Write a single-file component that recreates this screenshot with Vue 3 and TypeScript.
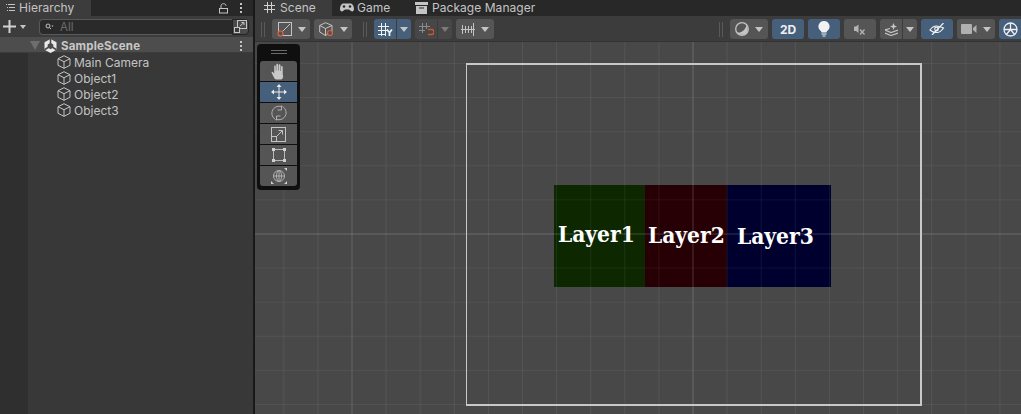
<script setup lang="ts">
const GRID = 34.1
const originX = 693 - 255
const originY = 234 - 42

const range = (from: number, to: number) => {
  const out: number[] = []
  for (let i = from; i <= to; i++) out.push(i)
  return out
}

const vLines = range(-13, 10).map((k) => ({ pos: originX + k * GRID, major: k % 10 === 0, center: k === 0 }))
const hLines = range(-5, 5).map((k) => ({ pos: originY + k * GRID, center: k === 0 }))

const objects = ['Main Camera', 'Object1', 'Object2', 'Object3']
const layers = [
  { name: 'Layer1', cls: 'green' },
  { name: 'Layer2', cls: 'red' },
  { name: 'Layer3', cls: 'blue' },
]
</script>

<template>
  <div class="editor">
    <section class="hierarchy">
      <div class="tabs">
        <div class="tab active hier-tab">
          <svg class="ico" width="9" height="9" viewBox="0 0 9 9">
            <path d="M0 1.500h1M2 1.500h7M1 4.500h1M3 4.500h6M1 7.500h1M3 7.500h6" stroke="#c4c4c4" fill="none" />
          </svg>
          <span>Hierarchy</span>
        </div>
        <div class="tab-spacer"></div>
        <svg class="lock" width="9" height="11" viewBox="0 0 9 11">
          <path d="M2 5V2.800C2 1.400 3 .7 4.500 .7S7 1.400 7 2.800" stroke="#c4c4c4" fill="none" />
          <rect x=".5" y="5.500" width="8" height="4.500" stroke="#c4c4c4" fill="none" />
        </svg>
        <div class="kebab light"><i></i><i></i><i></i></div>
      </div>
      <div class="hier-bar">
        <svg class="plus" width="13" height="13" viewBox="0 0 13 13">
          <path d="M6.500 0v13M0 6.500h13" stroke="#d2d2d2" stroke-width="2" />
        </svg>
        <i class="caret small"></i>
        <div class="search">
          <svg width="9" height="7" viewBox="0 0 9 7">
            <circle cx="3" cy="3" r="2" stroke="#c4c4c4" fill="none" />
            <path d="M4.500 4.500 6 6" stroke="#c4c4c4" />
            <path d="M6.500 2.500h2L7.500 4z" fill="#c4c4c4" />
          </svg>
          <span>All</span>
        </div>
        <div class="search-btn">
          <svg width="13" height="13" viewBox="0 0 13 13" fill="none" stroke="#c4c4c4">
            <rect x="3.500" y=".5" width="9" height="8" />
            <rect x=".5" y="7.500" width="5" height="5" fill="#3a3a3a" />
            <path d="M6 6l4-3.500M7.500 2.500H10V5" />
          </svg>
        </div>
      </div>
      <div class="scene-row">
        <i class="tree-arrow"></i>
        <svg class="unity" width="13" height="14" viewBox="0 0 13 14">
          <path d="M6.500 0 12.500 3.300V10.700L6.500 14 .5 10.700V3.300Z" fill="#eaeaea" />
          <path d="M6.500 7V0M6.500 7 .5 10.700M6.500 7 12.500 10.700" stroke="#4d4d4d" stroke-width="1.600" />
          <path d="M6.500 3.800 9.300 5.400V8.600L6.500 10.200 3.700 8.600V5.400Z" fill="#4d4d4d" />
        </svg>
        <span class="scene-name">SampleScene</span>
        <div class="kebab"><i></i><i></i><i></i></div>
      </div>
      <div class="tree">
        <div class="gutter"></div>
        <ul class="items">
          <li v-for="name in objects" :key="name">
            <svg width="14" height="14" viewBox="0 0 14 14" fill="none" stroke="#c4c4c4">
              <path d="M7 .7 13 3.700V10.300L7 13.300 1 10.300V3.700ZM1 3.700 7 6.700 13 3.700M7 6.700V13.300" />
            </svg>
            <span>{{ name }}</span>
          </li>
        </ul>
      </div>
    </section>

    <section class="scene">
      <div class="tabs">
        <div class="tab active scene-tab">
          <svg class="ico" width="11" height="11" viewBox="0 0 11 11">
            <path d="M3.500 0v11M7.500 0v11M0 3.500h11M0 7.500h11" stroke="#d2d2d2" />
          </svg>
          <span>Scene</span>
        </div>
        <div class="tab game-tab">
          <svg class="ico" width="14" height="9" viewBox="0 0 14 9">
            <path d="M3.500 .5h7C12.500 .5 14 3 14 6c0 2-1.500 3-3 2L9 6.500H5L3 8C1.500 9 0 8 0 6 0 3 1.500 .5 3.500 .5Z" fill="#c4c4c4" />
            <circle cx="4" cy="3.500" r="1.300" fill="#282828" />
            <circle cx="10" cy="3.500" r="1.300" fill="#282828" />
          </svg>
          <span>Game</span>
        </div>
        <div class="tab pm-tab">
          <svg class="ico" width="13" height="12" viewBox="0 0 13 12">
            <path d="M0 0h13v3H0zM1 4h11v8H1z" fill="#c4c4c4" />
            <path d="M4 6h5" stroke="#282828" />
          </svg>
          <span>Package Manager</span>
        </div>
      </div>

      <div class="toolbar">
        <i class="grip"></i>
        <button class="tb w38 first">
          <svg width="15" height="15" viewBox="0 0 15 15" fill="none">
            <rect x="1.500" y=".5" width="13" height="13" stroke="#c4c4c4" />
            <path d="M3.500 11.500 13 2" stroke="#c4c4c4" />
            <circle cx="3.500" cy="11.500" r="2.500" fill="#555" stroke="#e0603a" stroke-width="1.200" />
          </svg>
          <i class="caret"></i>
        </button>
        <button class="tb w38">
          <svg width="15" height="15" viewBox="0 0 15 15" fill="none">
            <path d="M6.500 .7 13 3.500V10L6.500 13.500 .7 10V3.500ZM.7 3.500 6.500 6.500 13 3.500M6.500 6.500V13.500" stroke="#c4c4c4" />
            <circle cx="11" cy="11" r="2.500" fill="#555" stroke="#e0603a" stroke-width="1.200" />
          </svg>
          <i class="caret"></i>
        </button>
        <i class="grip second"></i>
        <div class="split">
          <button class="tb blue main">
            <svg width="15" height="13" viewBox="0 0 15 13" fill="none" stroke="#f0f0f0">
              <path d="M3.500 0v13M7.500 0v13M0 3.500h11M0 7.500h10M0 11.500h7" />
              <path d="M9 6.500 11.500 9.500 14 6.500M11.500 9.500V13" stroke-width="1.800" />
            </svg>
          </button>
          <button class="tb blue arrow"><i class="caret"></i></button>
        </div>
        <div class="split">
          <button class="tb dim main">
            <svg width="15" height="13" viewBox="0 0 15 13" fill="none">
              <path d="M3.500 0v10M7.500 0v6M0 3.500h11M0 7.500h6" stroke="#8b8b8b" />
              <path d="M9 6.500h3.500a2 2 0 0 1 0 5H9" stroke="#c9562e" stroke-width="1.500" />
            </svg>
          </button>
          <button class="tb dim arrow"><i class="caret faded"></i></button>
        </div>
        <button class="tb w38">
          <svg width="14" height="13" viewBox="0 0 14 13" fill="none" stroke="#c4c4c4">
            <path d="M1.500 2v9M4.500 3v7M7.500 3v7M10.500 3v7M12.500 0v13M0 6.500h14" />
          </svg>
          <i class="caret"></i>
        </button>

        <div class="tb-fill"></div>

        <i class="grip third"></i>
        <button class="tb w38">
          <svg width="14" height="14" viewBox="0 0 14 14">
            <circle cx="7" cy="7" r="6.300" fill="none" stroke="#c4c4c4" stroke-width="1.300" />
            <path d="M2 10.500C6 11 10 9 11.500 3c2 3.500 1.500 7-1 9-2.500 1.500-6 1-8.500-1.500Z" fill="#c4c4c4" />
          </svg>
          <i class="caret"></i>
        </button>
        <button class="tb blue w32 label">2D</button>
        <button class="tb blue w32">
          <svg width="12" height="16" viewBox="0 0 12 16">
            <path d="M6 0a5.500 5.500 0 0 1 3.200 10c-.5.400-.7 1-.7 1.500h-5c0-.5-.2-1.100-.7-1.500A5.500 5.500 0 0 1 6 0Z" fill="#f2f2f2" />
            <path d="M3.500 13h5M4.500 15h3" stroke="#f2f2f2" />
          </svg>
        </button>
        <button class="tb w32">
          <svg width="12" height="11" viewBox="0 0 12 11">
            <path d="M0 2.500h2L4.500 .5v8.500L2 7H0Z" fill="#b4b4b4" />
            <path d="M6 5.500l4.500 5M10.500 5.500l-4.500 5" stroke="#b4b4b4" stroke-width="1.300" />
          </svg>
        </button>
        <div class="split">
          <button class="tb main">
            <svg width="13" height="13" viewBox="0 0 13 13" fill="none">
              <path d="M8.500 0 9.500 2.500 12 3.500 9.500 4.500 8.500 7 7.500 4.500 5 3.500 7.500 2.500Z" fill="#c4c4c4" />
              <path d="M0 7 5 5.500M0 7 6 9.500 13 7M0 10 6 12.500 13 10" stroke="#c4c4c4" stroke-width="1.200" />
            </svg>
          </button>
          <button class="tb arrow"><i class="caret"></i></button>
        </div>
        <button class="tb blue w32">
          <svg width="16" height="12" viewBox="0 0 16 12" fill="none" stroke="#f0f0f0" stroke-width="1.200">
            <path d="M1 7c2-3 4-4 6.500-4S12 4 14.500 5c-2 3-4 4.500-6.500 4.500S3 9 1 7Z" />
            <circle cx="7.500" cy="6" r="1.800" />
            <path d="M3 12 14.500 0" />
          </svg>
        </button>
        <button class="tb w38">
          <svg width="16" height="10" viewBox="0 0 16 10">
            <rect width="11" height="10" rx="1" fill="#b0b0b0" />
            <path d="M12 4 15.500 1v8L12 6Z" fill="#b0b0b0" />
          </svg>
          <i class="caret"></i>
        </button>
        <button class="tb blue gizmo">
          <svg width="15" height="15" viewBox="0 0 15 15" fill="none" stroke="#f0f0f0" stroke-width="1.300">
            <circle cx="7.500" cy="7.500" r="6.500" />
            <path d="M1 7.500h13M7.500 1v6.500L3 13M7.500 7.500 12 13" />
          </svg>
        </button>
      </div>

      <div class="canvas">
        <div class="layer-strip">
          <div v-for="layer in layers" :key="layer.name" class="layer" :class="layer.cls">
            <span>{{ layer.name }}</span>
          </div>
        </div>

        <svg class="grid" width="766" height="372">
          <line
            v-for="l in vLines"
            :key="'v' + l.pos"
            :x1="l.pos"
            :x2="l.pos"
            y1="0"
            y2="372"
            :stroke-opacity="l.center ? 0.2 : l.major ? 0.15 : 0.07"
            stroke="#fff"
          />
          <line
            v-for="l in hLines"
            :key="'h' + l.pos"
            :y1="l.pos"
            :y2="l.pos"
            x1="0"
            x2="766"
            :stroke-opacity="l.center ? 0.2 : 0.06"
            stroke="#fff"
          />
        </svg>

        <div class="frame"></div>

        <div class="palette">
          <div class="palette-grip"><i></i><i></i></div>
          <button class="tool">
            <svg width="16" height="17" viewBox="0 0 15 16">
              <path d="M3 14C1.500 11 .3 9 .5 8.500 1 7.500 2.500 9 3 10V3.500C3 2 4.500 2 4.500 3.500V7h.5V1.800c0-1.500 1.700-1.500 1.700 0V7h.5V2.300c0-1.500 1.700-1.500 1.700 0V7.500h.5V4c0-1.500 1.600-1.500 1.600 0v6.500C12 13 11 15.500 9 15.500H5.500C4.500 15.500 3.700 15 3 14Z" fill="#c8c8c8" />
            </svg>
          </button>
          <button class="tool on">
            <svg width="16" height="16" viewBox="0 0 16 16" fill="#eaeaea">
              <path d="M8 0 10.500 3h-5ZM8 16 5.500 13h5ZM0 8 3 5.500v5ZM16 8 13 10.500v-5Z" />
              <path d="M3 8h10M8 3v10" stroke="#eaeaea" />
            </svg>
          </button>
          <button class="tool">
            <svg width="16" height="16" viewBox="0 0 16 16" fill="none" stroke="#b0b0b0">
              <path d="M4.500 14.500C.5 12 -.2 7 2.500 3.800 4.500 1.500 7.500 .8 10 1.500" />
              <path d="M11.500 1.500C15.500 4 16.200 9 13.500 12.200 11.500 14.500 8.500 15.200 6 14.500" />
              <path d="M10.500 .5V5H6.500M5.500 15.500V11H9.500" />
            </svg>
          </button>
          <button class="tool">
            <svg width="15" height="15" viewBox="0 0 15 15" fill="none" stroke="#c4c4c4">
              <rect x=".5" y=".5" width="14" height="14" />
              <rect x=".5" y="9.500" width="5" height="5" />
              <path d="M6 9 11 4M7.500 3.500H11.500V7.500" />
            </svg>
          </button>
          <button class="tool">
            <svg width="14" height="14" viewBox="0 0 14 14">
              <rect x="1.500" y="1.500" width="11" height="11" fill="none" stroke="#b8b8b8" />
              <path d="M0 0h3v3H0zM11 0h3v3h-3zM0 11h3v3H0zM11 11h3v3h-3z" fill="#d0d0d0" />
            </svg>
          </button>
          <button class="tool">
            <svg width="16" height="16" viewBox="0 0 16 16" fill="none" stroke="#b0b0b0">
              <circle cx="8" cy="8" r="5.500" />
              <ellipse cx="8" cy="8" rx="2.500" ry="5.500" />
              <path d="M2.500 8h11M8 2.500v11" />
              <path d="M0 16v-3l3 3ZM16 16v-3l-3 3ZM16 0v3l-3-3Z" fill="#d0d0d0" stroke="none" />
            </svg>
          </button>
        </div>
      </div>
    </section>
  </div>
</template>

<style>
html,
body {
  margin: 0;
  background: #282828;
}
</style>

<style scoped>
.editor {
  display: flex;
  width: 1021px;
  height: 414px;
  overflow: hidden;
  background: #191919;
  font-family: Inter, "Noto Sans", sans-serif;
  font-size: 12px;
  color: #c4c4c4;
}

.hierarchy {
  display: flex;
  flex-direction: column;
  width: 253px;
  margin-right: 2px;
  background: #383838;
}

.scene {
  display: flex;
  flex-direction: column;
  flex: 1;
  min-width: 0;
}

.tabs {
  display: flex;
  align-items: center;
  height: 16px;
  flex: none;
  background: #282828;
}

.tab {
  display: flex;
  align-items: center;
  height: 16px;
  box-sizing: border-box;
  gap: 4px;
  padding-bottom: 1px;
  letter-spacing: 0.05px;
  white-space: nowrap;
}

.tab.active {
  background: #3c3c3c;
}

.hier-tab {
  width: 91px;
  padding-left: 6px;
  gap: 4px;
}

.scene-tab {
  width: 77px;
  padding-left: 9px;
  gap: 5px;
}

.game-tab {
  width: 75px;
  padding-left: 8px;
  gap: 3px;
}

.pm-tab {
  padding-left: 8px;
  gap: 4px;
}

.tab-spacer {
  flex: 1;
}

.lock {
  margin-right: 12px;
}

.kebab {
  display: flex;
  flex-direction: column;
  gap: 2px;
  margin-right: 11px;
}

.kebab i {
  width: 2px;
  height: 2px;
  background: #c4c4c4;
}

.hier-bar {
  display: flex;
  align-items: center;
  height: 21px;
  flex: none;
  padding-left: 3px;
  background: #3c3c3c;
  box-sizing: border-box;
}

.plus {
  margin-right: 4px;
}

.caret {
  display: block;
  width: 0;
  height: 0;
  border-left: 4px solid transparent;
  border-right: 4px solid transparent;
  border-top: 5px solid #c4c4c4;
}

.caret.small {
  border-left-width: 3.500px;
  border-right-width: 3.500px;
  border-top-width: 4px;
}

.caret.faded {
  border-top-color: #7a7a7a;
}

.search {
  display: flex;
  align-items: center;
  gap: 6px;
  width: 193px;
  height: 16px;
  margin-left: 13px;
  padding-left: 5px;
  box-sizing: border-box;
  border: 1px solid #585858;
  border-right: none;
  border-radius: 4px 0 0 4px;
  background: #2a2a2a;
  color: #6c6c6c;
  font-size: 11.500px;
}

.search-btn {
  display: flex;
  align-items: center;
  justify-content: center;
  width: 17px;
  height: 16px;
  box-sizing: border-box;
  border: 1px solid #242424;
  border-radius: 0 4px 4px 0;
  background: #4a4a4a;
}

.scene-row {
  display: flex;
  align-items: center;
  height: 16px;
  flex: none;
  box-sizing: border-box;
  background: #4d4d4d;
  padding-left: 30px;
  padding-top: 2px;
  border-bottom: 1px solid #3c3c3c;
}

.tree-arrow {
  display: block;
  width: 0;
  height: 0;
  border-left: 5px solid transparent;
  border-right: 5px solid transparent;
  border-top: 9px solid #6e6e6e;
  margin-right: 4px;
}

.unity {
  margin-right: 4px;
}

.scene-name {
  flex: 1;
  font-weight: 700;
  font-size: 11.500px;
  letter-spacing: 0.2px;
  color: #c8c8c8;
}

.tree {
  display: flex;
  flex: 1;
  min-height: 0;
}

.gutter {
  width: 28px;
  background: #2f2f2f;
}

.items {
  list-style: none;
  margin: 0;
  padding: 1px 0 0 29px;
}

.items li {
  display: flex;
  align-items: center;
  height: 16px;
  gap: 3px;
}

.toolbar {
  display: flex;
  align-items: center;
  gap: 4px;
  height: 26px;
  flex: none;
  background: #3c3c3c;
  border-bottom: 1px solid #333;
  box-sizing: border-box;
  padding-top: 1px;
}

.grip {
  display: block;
  width: 4px;
  height: 15px;
  margin-left: 6px;
  margin-right: 3px;
  box-sizing: border-box;
  border-left: 1px solid #5a5a5a;
  border-right: 1px solid #5a5a5a;
}

.grip.second {
  margin-left: 7px;
  margin-right: 3px;
}

.grip.third {
  margin-left: 0;
  margin-right: 3px;
}

.tb-fill {
  flex: 1;
}

.tb {
  display: flex;
  align-items: center;
  justify-content: center;
  gap: 6px;
  height: 20px;
  padding: 0;
  border: none;
  border-radius: 3px;
  background: #555;
  font: inherit;
  color: #f0f0f0;
}

.w38 {
  width: 38px;
}

.w32 {
  width: 32px;
}

.tb.blue {
  background: #46607c;
}

.tb.label {
  font-weight: 700;
  font-size: 12px;
}

.tb.gizmo {
  width: 22px;
  border-radius: 3px 0 0 3px;
}

.split {
  display: flex;
  gap: 1px;
}

.tb.main {
  width: 22px;
  border-radius: 3px 0 0 3px;
}

.tb.arrow {
  width: 14px;
  border-radius: 0 3px 3px 0;
}

.tb.dim {
  background: #474747;
}

.canvas {
  position: relative;
  flex: 1;
  overflow: hidden;
  background: #484848;
}

.grid {
  position: absolute;
  left: 0;
  top: 0;
}

.layer-strip {
  position: absolute;
  left: 299px;
  top: 143px;
  display: flex;
  height: 102px;
}

.layer {
  display: flex;
  align-items: center;
  font-family: "DejaVu Serif", serif;
  font-stretch: condensed;
  font-weight: 700;
  font-size: 22.500px;
  color: #fff;
  white-space: nowrap;
}

.layer.green {
  width: 91px;
  background: #0d2800;
  padding-left: 4px;
  box-sizing: border-box;
  padding-bottom: 5px;
}

.layer.red {
  width: 82px;
  background: #260004;
  padding-left: 3px;
  box-sizing: border-box;
  padding-bottom: 3px;
}

.layer.blue {
  width: 104px;
  background: #00002e;
  padding-left: 10px;
  box-sizing: border-box;
  padding-bottom: 1px;
}

.frame {
  position: absolute;
  left: 211px;
  top: 21px;
  width: 456px;
  height: 343px;
  box-sizing: border-box;
  border: 2px solid #c8c8c8;
  border-width: 2px 2px 2px 1.500px;
}

.palette {
  position: absolute;
  left: 2px;
  top: 2px;
  display: flex;
  flex-direction: column;
  align-items: center;
  gap: 1px;
  width: 43px;
  height: 146px;
  border-radius: 4px;
  background: #0f0f0f;
}

.palette-grip {
  display: flex;
  flex-direction: column;
  justify-content: center;
  gap: 2px;
  height: 16px;
  flex: none;
}

.palette-grip i {
  display: block;
  width: 16px;
  height: 1px;
  background: #6a6a6a;
}

.tool {
  display: flex;
  align-items: center;
  justify-content: center;
  width: 37px;
  height: 20px;
  flex: none;
  padding: 0;
  border: none;
  background: #555;
}

.tool:first-of-type {
  border-radius: 3px 3px 0 0;
}

.tool:last-child {
  border-radius: 0 0 3px 3px;
}

.tool.on {
  background: #46607c;
}
</style>
